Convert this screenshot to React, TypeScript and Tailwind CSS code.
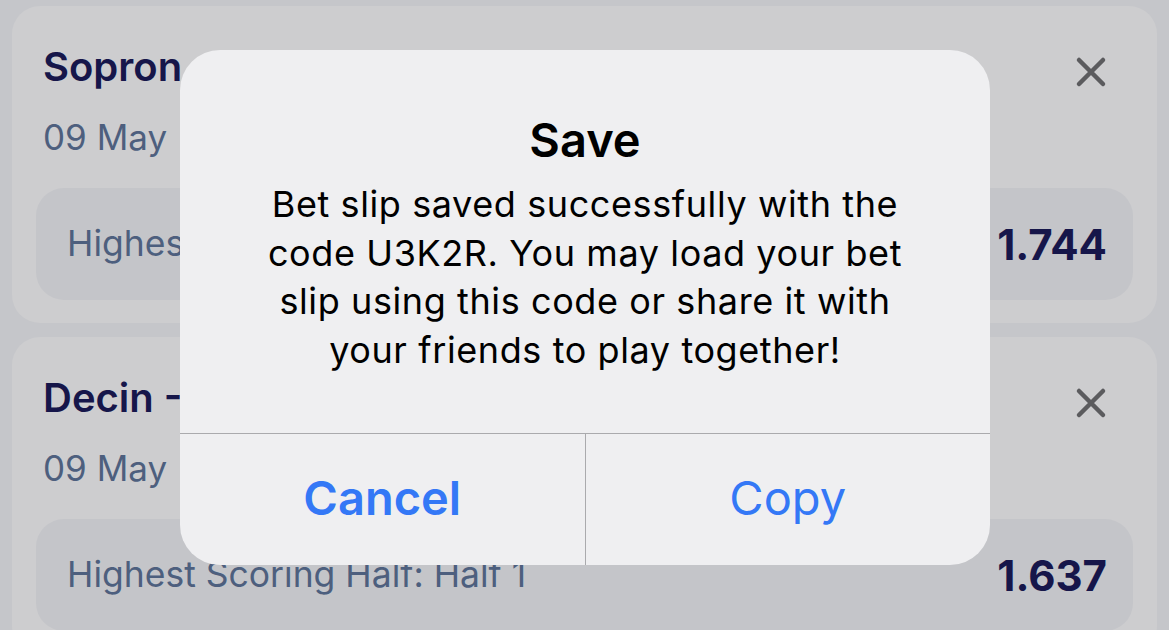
import React from "react";

function CloseIcon() {
    return (
        <svg width="32" height="32" viewBox="0 0 32 32" className="mt-[13px]">
            <path
                d="M4 4 L28 28 M28 4 L4 28"
                stroke="#5b5b5e"
                strokeWidth="4.5"
                strokeLinecap="round"
            />
        </svg>
    );
}

function BetCard({ title, odds }: { title: string; odds: string }) {
    return (
        <div className="rounded-[28px] bg-[#cdcdcf] px-6 pt-[37px] pb-[23px]">
            <div className="flex items-start justify-between pl-[7px] pr-[26px]">
                <h2 className="text-[40px] leading-[48px] font-semibold text-[#16164a]">
                    {title}
                </h2>
                <CloseIcon />
            </div>
            <p className="mt-6 pl-[7px] text-[35px] leading-[44px] text-[#4d5f7e]">
                09 May
            </p>
            <div className="mt-[29px] flex h-[112px] items-center justify-between rounded-[28px] bg-[#c4c5c9] pl-[31px] pr-[26px]">
                <span className="text-[35.5px] text-[#4d5f7e]">
                    Highest Scoring Half: Half 1
                </span>
                <span className="text-[42px] font-bold text-[#16164a]">
                    {odds}
                </span>
            </div>
        </div>
    );
}

export default function App() {
    return (
        <div
            className="relative h-[630px] w-[1169px] overflow-hidden bg-[#c5c6ca]"
            style={{ fontFamily: "Inter, 'Liberation Sans', sans-serif" }}
        >
            <div className="flex flex-col gap-[14px] px-3 pt-[6px]">
                <BetCard title="Sopron - Kecskemet" odds="1.744" />
                <BetCard title="Decin - Opava" odds="1.637" />
            </div>

            <div className="absolute left-[180px] top-[50px] flex h-[515px] w-[810px] flex-col overflow-hidden rounded-[40px] bg-[#efeff1]">
                <div className="flex flex-1 flex-col items-center pt-[66px] text-center text-black">
                    <h1 className="text-[47px] leading-[48px] font-semibold">Save</h1>
                    <p className="mt-4 text-[36px] leading-[48.5px] tracking-[0.6px]">
                        Bet slip saved successfully with the
                        <br />
                        code U3K2R. You may load your bet
                        <br />
                        slip using this code or share it with
                        <br />
                        your friends to play together!
                    </p>
                </div>
                <div className="flex h-[132px] border-t border-[#aaaaad]">
                    <button className="flex-1 pb-[2px] text-[47px] font-semibold text-[#3478f6]">
                        Cancel
                    </button>
                    <div className="w-px bg-[#aaaaad]" />
                    <button className="flex-1 pb-[2px] text-[47px] text-[#3478f6]">
                        Copy
                    </button>
                </div>
            </div>
        </div>
    );
}
